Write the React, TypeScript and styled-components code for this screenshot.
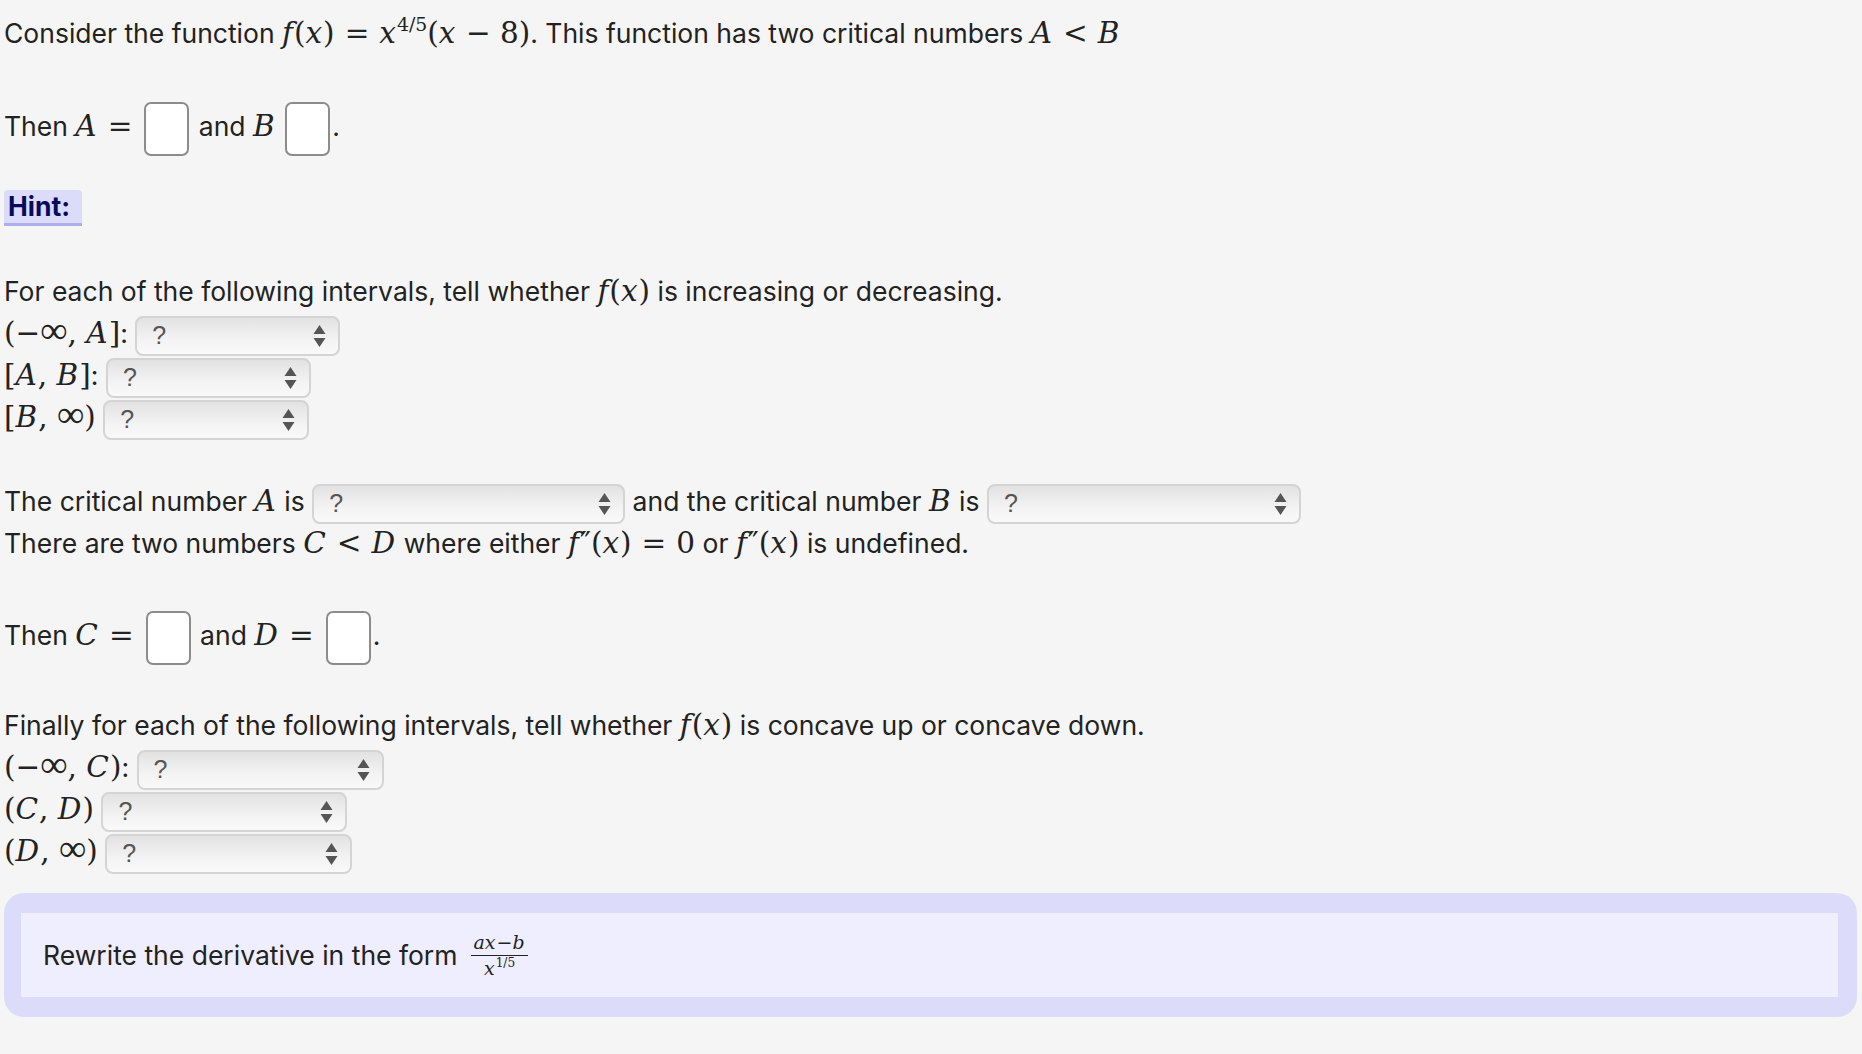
import styled, { createGlobalStyle } from 'styled-components';

const GlobalStyle = createGlobalStyle`
  html, body {
    margin: 0;
    padding: 0;
    background: #f5f5f5;
  }
  body {
    font-family: Inter, "Noto Sans", sans-serif;
    font-size: 26.5px;
    color: #222;
  }
`;

const Page = styled.div`
  padding: 12px 5px 0 4px;
`;

const Line = styled.div<{ $tall?: boolean; $gap?: number }>`
  height: ${({ $tall }) => ($tall ? 54 : 42)}px;
  line-height: ${({ $tall }) => ($tall ? 54 : 42)}px;
  white-space: nowrap;
  margin-bottom: ${({ $gap }) => $gap ?? 0}px;
`;

const M = styled.span`
  font-family: "DejaVu Serif", "Liberation Serif", serif;
  font-size: 29.5px;
  color: #222;
`;

const V = styled.i`
  font-style: italic;
  padding-right: 1px;
`;

const Rel = styled.span`
  margin: 0 10px;
`;

const Inf = styled.span`
  font-family: "Liberation Serif", serif;
  font-size: 1.3em;
  line-height: 0;
`;

const Sup = styled.span`
  font-size: 0.64em;
  vertical-align: 0.62em;
  line-height: 0;
`;

const Blank = styled.span`
  display: inline-block;
  vertical-align: middle;
  box-sizing: border-box;
  width: 45px;
  height: 54px;
  margin: 0 2px;
  background: #fff;
  border: 2px solid #8c8c8c;
  border-radius: 7px;
`;

const SelectBox = styled.span<{ $w: number }>`
  display: inline-flex;
  vertical-align: middle;
  align-items: center;
  justify-content: space-between;
  box-sizing: border-box;
  width: ${({ $w }) => $w}px;
  height: 40px;
  padding: 0 12px 0 15px;
  border: 2px solid #d4d4d4;
  border-radius: 8px;
  background: linear-gradient(#e2e2e2, #f3f3f3 60%, #f9f9f9);
  font-family: "Liberation Sans", Arial, sans-serif;
  font-size: 25px;
  line-height: 1;
  color: #555;
`;

const HintLabel = styled.div`
  display: inline-block;
  height: 36px;
  line-height: 33px;
  box-sizing: border-box;
  padding: 0 12px 0 4px;
  background: #dcdcfa;
  border-bottom: 3px solid #aeaeee;
  border-radius: 4px 4px 0 0;
  font-weight: 700;
  color: #0a0a5c;
  margin-bottom: 44px;
`;

const HintOuter = styled.div`
  margin-top: 21px;
  padding: 20px 19px 20px 17px;
  background: #dcdcfa;
  border-radius: 20px;
`;

const HintInner = styled.div`
  display: flex;
  align-items: center;
  height: 84px;
  padding: 0 22px;
  background: #eeeefe;
`;

const Frac = styled.span`
  display: inline-flex;
  flex-direction: column;
  align-items: center;
  margin-left: 14px;
  font-family: "DejaVu Serif", "Liberation Serif", serif;
  font-size: 19px;
  line-height: 1;
`;

const Num = styled.span`
  padding: 0 2px 3px;
  border-bottom: 1.5px solid #222;
`;

const Den = styled.span`
  padding-top: 3px;
`;

const Hint = styled.span`
  display: inline-flex;
  align-items: center;
`;

const Arrows = () => (
  <svg width="13" height="24" viewBox="0 0 13 24">
    <polygon points="6.5,1 12.5,10 0.5,10" fill="#555" />
    <polygon points="0.5,14 12.5,14 6.5,23" fill="#555" />
  </svg>
);

const Select = ({ w }: { w: number }) => (
  <SelectBox $w={w}>
    <span>?</span>
    <Arrows />
  </SelectBox>
);

const fx = (
  <M>
    <V>f</V>(<V>x</V>)
  </M>
);

const fpp = (
  <M>
    <V>f</V>″(<V>x</V>)
  </M>
);

export default function App() {
  return (
    <Page>
      <GlobalStyle />
      <Line $gap={45}>
        Consider the function{' '}
        <M>
          <V>f</V>(<V>x</V>)<Rel>=</Rel>
          <V>x</V>
          <Sup>4/5</Sup>(<V>x</V> − 8)
        </M>
        . This function has two critical numbers{' '}
        <M>
          <V>A</V>
          <Rel>&lt;</Rel>
          <V>B</V>
        </M>
      </Line>

      <Line $tall $gap={37}>
        Then{' '}
        <M>
          <V>A</V>
          <Rel>=</Rel>
        </M>
        <Blank /> and{' '}
        <M>
          <V>B</V>
        </M>{' '}
        <Blank />.
      </Line>

      <HintLabel>Hint:</HintLabel>

      <Line>
        For each of the following intervals, tell whether {fx} is increasing or decreasing.
      </Line>
      <Line>
        <M>
          (−<Inf>∞</Inf>, <V>A</V>]
        </M>
        : <Select w={205} />
      </Line>
      <Line>
        <M>
          [<V>A</V>, <V>B</V>]
        </M>
        : <Select w={205} />
      </Line>
      <Line $gap={42}>
        <M>
          [<V>B</V>, <Inf>∞</Inf>)
        </M>{' '}
        <Select w={206} />
      </Line>

      <Line>
        The critical number{' '}
        <M>
          <V>A</V>
        </M>{' '}
        is <Select w={313} /> and the critical number{' '}
        <M>
          <V>B</V>
        </M>{' '}
        is <Select w={314} />
      </Line>
      <Line $gap={44}>
        There are two numbers{' '}
        <M>
          <V>C</V>
          <Rel>&lt;</Rel>
          <V>D</V>
        </M>{' '}
        where either{' '}
        <M>
          {fpp}
          <Rel>=</Rel>0
        </M>{' '}
        or {fpp} is undefined.
      </Line>

      <Line $tall $gap={42}>
        Then{' '}
        <M>
          <V>C</V>
          <Rel>=</Rel>
        </M>
        <Blank /> and{' '}
        <M>
          <V>D</V>
          <Rel>=</Rel>
        </M>
        <Blank />.
      </Line>

      <Line>
        Finally for each of the following intervals, tell whether {fx} is concave up or concave down.
      </Line>
      <Line>
        <M>
          (−<Inf>∞</Inf>, <V>C</V>)
        </M>
        : <Select w={247} />
      </Line>
      <Line>
        <M>
          (<V>C</V>, <V>D</V>)
        </M>{' '}
        <Select w={246} />
      </Line>
      <Line>
        <M>
          (<V>D</V>, <Inf>∞</Inf>)
        </M>{' '}
        <Select w={247} />
      </Line>

      <HintOuter>
        <HintInner>
          <Hint>
            Rewrite the derivative in the form
            <Frac>
              <Num>
                <V>ax</V>−<V>b</V>
              </Num>
              <Den>
                <V>x</V>
                <Sup>1/5</Sup>
              </Den>
            </Frac>
          </Hint>
        </HintInner>
      </HintOuter>
    </Page>
  );
}
